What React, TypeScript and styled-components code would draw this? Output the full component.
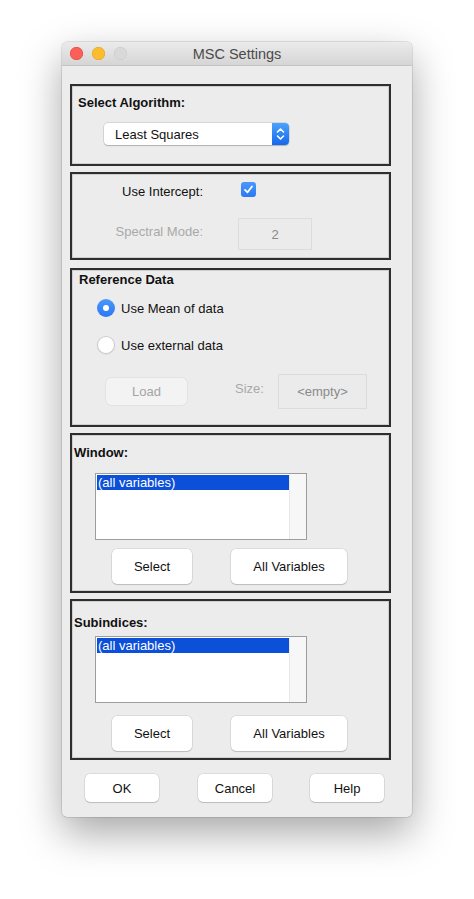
import React from 'react';
import styled, { createGlobalStyle } from 'styled-components';

const GlobalStyle = createGlobalStyle`
  html, body {
    margin: 0;
    padding: 0;
    background: #ffffff;
  }
  * {
    box-sizing: border-box;
  }
`;

const Page = styled.div`
	width: 474px;
	height: 899px;
	padding: 42px 0 0 62px;
	font-family: 'Liberation Sans', Arial, sans-serif;
	font-size: 13px;
	color: #1a1a1a;
`;

const Window = styled.div`
	width: 350px;
	height: 775px;
	background: #ececec;
	border-radius: 5px;
	overflow: hidden;
	box-shadow: 0 0 0 0.5px rgba(0, 0, 0, 0.2), 0 16px 40px rgba(0, 0, 0, 0.35);
	display: flex;
	flex-direction: column;
`;

const TitleBar = styled.div`
	height: 24px;
	flex: none;
	display: flex;
	align-items: center;
	padding-left: 8px;
	background: linear-gradient(#ebebeb, #d5d5d5);
	border-bottom: 1px solid #c4c4c4;
	position: relative;
`;

const Light = styled.span<{ $color: string; $border: string }>`
	width: 13px;
	height: 13px;
	border-radius: 50%;
	background: ${(p) => p.$color};
	box-shadow: inset 0 0 0 0.5px ${(p) => p.$border};
	margin-right: 9px;
`;

const WindowTitle = styled.div`
	position: absolute;
	left: 0;
	right: 0;
	text-align: center;
	color: #4a4a4a;
	font-size: 14.5px;
	pointer-events: none;
`;

const Content = styled.div`
	display: flex;
	flex-direction: column;
	padding: 18px 21px 0 8px;
`;

const Panel = styled.div<{ $height: number; $top?: number }>`
	height: ${(p) => p.$height}px;
	margin-top: ${(p) => p.$top ?? 0}px;
	border: 2px solid #2e2e2e;
	box-shadow: inset 0 0 0 1px #cfcfcf;
	display: flex;
	flex-direction: column;
`;

const PanelTitle = styled.div<{ $top: number; $left: number }>`
	font-weight: bold;
	line-height: 16px;
	margin: ${(p) => p.$top}px 0 0 ${(p) => p.$left}px;
	color: #111;
`;

const SelectBox = styled.div`
	margin: 12px 0 0 32px;
	width: 185px;
	height: 22px;
	background: #fff;
	border-radius: 4px;
	box-shadow: 0 0 0 0.5px rgba(0, 0, 0, 0.18), 0 1px 1px rgba(0, 0, 0, 0.18);
	display: flex;
	align-items: center;
	overflow: hidden;
`;

const SelectText = styled.span`
	flex: 1;
	padding-left: 11px;
	color: #111;
`;

const Stepper = styled.span`
	width: 17px;
	height: 100%;
	background: linear-gradient(#4ca2fd, #1668ea);
	display: flex;
	align-items: center;
	justify-content: center;
`;

const FormGrid = styled.div`
	display: grid;
	grid-template-columns: 131px 74px;
	column-gap: 35px;
	row-gap: 21px;
	align-items: center;
	margin-top: 8px;
`;

const FieldLabel = styled.span<{ $disabled?: boolean; $shift: number }>`
	text-align: right;
	color: ${(p) => (p.$disabled ? '#a9a9a9' : '#111')};
	position: relative;
	top: ${(p) => p.$shift}px;
`;

const CheckBox = styled.span`
	width: 15px;
	height: 15px;
	margin-left: 3px;
	border-radius: 3px;
	background: linear-gradient(#4b98fb, #2a79f2);
	display: flex;
	align-items: center;
	justify-content: center;
`;

const ValueBox = styled.div<{ $width: number; $height: number }>`
	width: ${(p) => p.$width}px;
	height: ${(p) => p.$height}px;
	border: 1px solid #dcdcdc;
	background: #ebebeb;
	color: #8a8a8a;
	display: flex;
	align-items: center;
	justify-content: center;
`;

const RadioRow = styled.div<{ $top: number }>`
	display: flex;
	align-items: center;
	gap: 6px;
	margin: ${(p) => p.$top}px 0 0 25px;
	height: 18px;
	color: #111;
`;

const Radio = styled.span<{ $checked?: boolean }>`
	width: 18px;
	height: 18px;
	border-radius: 50%;
	background: ${(p) => (p.$checked ? 'linear-gradient(#4b98fb, #2a79f2)' : '#fff')};
	box-shadow: ${(p) =>
		p.$checked ? 'none' : 'inset 0 0 0 1px #c9c9c9, 0 0.5px 1px rgba(0,0,0,0.15)'};
	display: flex;
	align-items: center;
	justify-content: center;
	&::after {
		content: '';
		display: ${(p) => (p.$checked ? 'block' : 'none')};
		width: 6px;
		height: 6px;
		border-radius: 50%;
		background: #fff;
	}
`;

const Row = styled.div<{ $top: number; $left: number }>`
	display: flex;
	align-items: center;
	margin: ${(p) => p.$top}px 0 0 ${(p) => p.$left}px;
`;

const Button = styled.button<{ $width: number; $height: number; $gap?: number; $disabled?: boolean }>`
	width: ${(p) => p.$width}px;
	height: ${(p) => p.$height}px;
	margin-left: ${(p) => p.$gap ?? 0}px;
	border: none;
	border-radius: 5px;
	background: ${(p) => (p.$disabled ? '#f3f3f3' : '#ffffff')};
	color: ${(p) => (p.$disabled ? '#a4a4a4' : '#111')};
	font-family: inherit;
	font-size: 13px;
	box-shadow: ${(p) =>
		p.$disabled
			? '0 0 0 0.5px rgba(0,0,0,0.08)'
			: '0 0 0 0.5px rgba(0,0,0,0.14), 0 1px 1px rgba(0,0,0,0.14)'};
	padding: 0;
`;

const SizeLabel = styled.span`
	margin: 0 14px 0 48px;
	color: #a9a9a9;
	width: 29px;
	padding-bottom: 6px;
`;

const ListBox = styled.div<{ $top: number }>`
	width: 212px;
	height: 67px;
	margin: ${(p) => p.$top}px 0 0 23px;
	background: #fff;
	border: 1px solid #9d9d9d;
	display: flex;
	padding: 1px 0 0 1px;
`;

const ListItems = styled.div`
	flex: 1;
`;

const ListItem = styled.div<{ $selected?: boolean }>`
	height: 15px;
	line-height: 15px;
	padding-left: 1px;
	background: ${(p) => (p.$selected ? '#0c4fd9' : 'transparent')};
	color: ${(p) => (p.$selected ? '#fff' : '#111')};
`;

const ScrollTrack = styled.div`
	width: 17px;
	margin-top: -1px;
	background: #f7f7f7;
	border-left: 1px solid #e8e8e8;
`;

const Footer = styled.div`
	display: flex;
	margin: 14px 0 0 23px;
`;

const Chevrons = () => (
	<svg width="9" height="14" viewBox="0 0 9 14">
		<path d="M1.5 5 L4.5 2 L7.5 5" fill="none" stroke="#fff" strokeWidth="1.6" strokeLinecap="round" strokeLinejoin="round" />
		<path d="M1.5 9 L4.5 12 L7.5 9" fill="none" stroke="#fff" strokeWidth="1.6" strokeLinecap="round" strokeLinejoin="round" />
	</svg>
);

const Check = () => (
	<svg width="11" height="11" viewBox="0 0 11 11">
		<path d="M2 5.8 L4.5 8.3 L9 2.5" fill="none" stroke="#fff" strokeWidth="1.8" strokeLinecap="round" strokeLinejoin="round" />
	</svg>
);

const VariableList = ({
	title,
	titleTop,
	listTop,
	buttonsTop,
	height,
	top,
}: {
	title: string;
	titleTop: number;
	listTop: number;
	buttonsTop: number;
	height: number;
	top: number;
}) => (
	<Panel $height={height} $top={top}>
		<PanelTitle $top={titleTop} $left={2}>
			{title}
		</PanelTitle>
		<ListBox $top={listTop}>
			<ListItems>
				<ListItem $selected>(all variables)</ListItem>
			</ListItems>
			<ScrollTrack />
		</ListBox>
		<Row $top={buttonsTop} $left={40}>
			<Button $width={80} $height={35}>
				Select
			</Button>
			<Button $width={116} $height={35} $gap={39}>
				All Variables
			</Button>
		</Row>
	</Panel>
);

const App = () => {
	return (
		<Page>
			<GlobalStyle />
			<Window>
				<TitleBar>
					<Light $color="#fc5f57" $border="#e0443e" />
					<Light $color="#fdbc2e" $border="#dea123" />
					<Light $color="#d9d9d9" $border="#c8c8c8" />
					<WindowTitle>MSC Settings</WindowTitle>
				</TitleBar>
				<Content>
					<Panel $height={82}>
						<PanelTitle $top={9} $left={6}>
							Select Algorithm:
						</PanelTitle>
						<SelectBox>
							<SelectText>Least Squares</SelectText>
							<Stepper>
								<Chevrons />
							</Stepper>
						</SelectBox>
					</Panel>

					<Panel $height={88} $top={6}>
						<FormGrid>
							<FieldLabel $shift={2}>Use Intercept:</FieldLabel>
							<CheckBox>
								<Check />
							</CheckBox>
							<FieldLabel $disabled $shift={-3}>
								Spectral Mode:
							</FieldLabel>
							<ValueBox $width={74} $height={32}>
								2
							</ValueBox>
						</FormGrid>
					</Panel>

					<Panel $height={159} $top={8}>
						<PanelTitle $top={2} $left={7}>
							Reference Data
						</PanelTitle>
						<RadioRow $top={11}>
							<Radio $checked />
							Use Mean of data
						</RadioRow>
						<RadioRow $top={19}>
							<Radio />
							Use external data
						</RadioRow>
						<Row $top={20} $left={34}>
							<Button $width={81} $height={27} $disabled>
								Load
							</Button>
							<SizeLabel>Size:</SizeLabel>
							<ValueBox $width={89} $height={35}>
								&lt;empty&gt;
							</ValueBox>
						</Row>
					</Panel>

					<VariableList title="Window:" height={160} top={6} titleTop={10} listTop={12} buttonsTop={9} />
					<VariableList title="Subindices:" height={161} top={6} titleTop={14} listTop={5} buttonsTop={13} />
				</Content>
				<Footer>
					<Button $width={74} $height={28}>
						OK
					</Button>
					<Button $width={74} $height={28} $gap={39}>
						Cancel
					</Button>
					<Button $width={74} $height={28} $gap={38}>
						Help
					</Button>
				</Footer>
			</Window>
		</Page>
	);
};

export default App;
